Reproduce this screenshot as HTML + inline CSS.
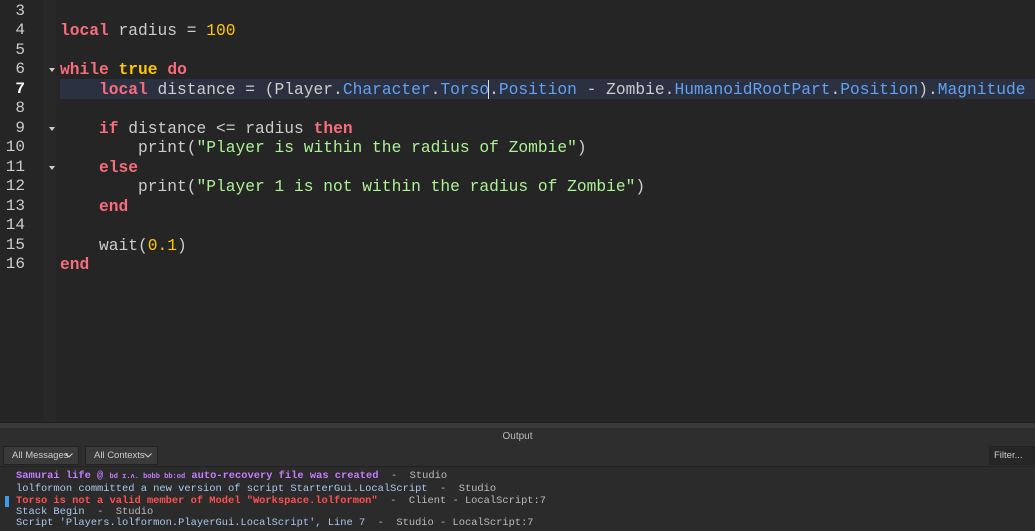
<!DOCTYPE html>
<html><head><style>
body{margin:0;width:1035px;height:531px;overflow:hidden;background:#252525;font-family:"Liberation Mono",monospace;position:relative}
#gut{position:absolute;left:0;top:0;width:44px;height:422px;background:#252525}
#gut2{position:absolute;left:44px;top:0;width:12px;height:422px;background:#282828}
.ln{position:absolute;left:0;width:25px;text-align:right;color:#cccccc;font-size:16px}
.cl{position:absolute;left:60px;font-size:16.25px;color:#cccccc;white-space:pre;letter-spacing:0}
.k{color:#f86d7c;font-weight:bold}.y{color:#ffc600;font-weight:bold}.n{color:#ffc600}.p{color:#61a1f1}.s{color:#adf195}
.fold{position:absolute;left:49px;width:0;height:0;border-left:3px solid transparent;border-right:3px solid transparent;border-top:4px solid #ccc}
#hl{position:absolute;left:60px;top:79px;width:975px;height:20px;background:#2b3140}
#div{position:absolute;left:0;top:422px;width:1035px;height:6px;background:#3a3a3a;border-top:1px solid #1e1e1e}
#oh{position:absolute;left:0;top:428px;width:1035px;height:18px;background:#2e2e2e;color:#bbb;font:10px "Liberation Sans",sans-serif;text-align:center;line-height:18px}
#tb{position:absolute;left:0;top:446px;width:1035px;height:20px;background:#2e2e2e;border-bottom:1px solid #222}
.dd{position:absolute;top:0;height:19px;background:#3a3a3a;border:1px solid #222;color:#ccc;font:9.5px "Liberation Sans",sans-serif;line-height:17px;padding-left:8px;box-sizing:border-box}
.dd svg{position:absolute;right:5px;top:6px}
#log{position:absolute;left:0;top:467px;width:1035px;height:64px;background:#2b2b2b}
.lg{position:absolute;left:16px;font-size:10.4px;white-space:pre;color:#a9c8ec}
</style></head><body>
<div id="gut"></div><div id="gut2"></div>
<div id="hl"></div>
<div class="ln" style="top:2px">3</div>
<div class="ln" style="top:21px">4</div>
<div class="ln" style="top:41px">5</div>
<div class="ln" style="top:60px">6</div>
<div class="ln" style="top:80px;font-weight:bold;color:#fff">7</div>
<div class="ln" style="top:99px">8</div>
<div class="ln" style="top:119px">9</div>
<div class="ln" style="top:138px">10</div>
<div class="ln" style="top:158px">11</div>
<div class="ln" style="top:177px">12</div>
<div class="ln" style="top:197px">13</div>
<div class="ln" style="top:216px">14</div>
<div class="ln" style="top:236px">15</div>
<div class="ln" style="top:255px">16</div>
<div class="fold" style="top:68px"></div>
<div class="fold" style="top:127px"></div>
<div class="fold" style="top:166px"></div>
<div class="cl" style="top:21px"><span class="k">local</span> radius = <span class="n">100</span></div>
<div class="cl" style="top:60px"><span class="k">while</span> <span class="y">true</span> <span class="k">do</span></div>
<div class="cl" style="top:80px">    <span class="k">local</span> distance = (Player.<span class="p">Character</span>.<span class="p">Torso</span><span style="border-left:1px solid #ddd;margin-left:-1px"></span>.<span class="p">Position</span> - Zombie.<span class="p">HumanoidRootPart</span>.<span class="p">Position</span>).<span class="p">Magnitude</span></div>
<div class="cl" style="top:119px">    <span class="k">if</span> distance &lt;= radius <span class="k">then</span></div>
<div class="cl" style="top:138px">        print(<span class="s">"Player is within the radius of Zombie"</span>)</div>
<div class="cl" style="top:158px">    <span class="k">else</span></div>
<div class="cl" style="top:177px">        print(<span class="s">"Player 1 is not within the radius of Zombie"</span>)</div>
<div class="cl" style="top:197px">    <span class="k">end</span></div>
<div class="cl" style="top:236px">    wait(<span class="n">0.1</span>)</div>
<div class="cl" style="top:255px"><span class="k">end</span></div>
<div id="div"></div>
<div id="oh">Output</div>
<div id="tb">
<div class="dd" style="left:3px;width:76px">All Messages <svg width="8" height="5"><path d="M0.5 0.5L4 4L7.5 0.5" stroke="#ccc" fill="none"/></svg></div>
<div class="dd" style="left:85px;width:73px">All Contexts <svg width="8" height="5"><path d="M0.5 0.5L4 4L7.5 0.5" stroke="#ccc" fill="none"/></svg></div>
<div class="dd" style="left:989px;width:46px;background:#262626;padding-left:4px">Filter...</div>
</div>
<div id="log">
<div class="lg" style="top:3px"><span style="color:#c77dff;font-weight:bold">Samurai life @ <span style="font-size:7px">bd ɪ.ʌ. bobb bb:od</span> auto-recovery file was created</span><span style="color:#bbb">  -  Studio</span></div>
<div class="lg" style="top:16px">lolformon committed a new version of script StarterGui.LocalScript<span style="color:#bbb">  -  Studio</span></div>
<div style="position:absolute;left:5px;top:29px;width:4px;height:11px;background:#3a9ee8"></div>
<div class="lg" style="top:28px"><span style="color:#ff4f4f;font-weight:bold">Torso is not a valid member of Model "Workspace.lolformon"</span><span style="color:#bbb">  -  Client - LocalScript:7</span></div>
<div class="lg" style="top:39px">Stack Begin<span style="color:#bbb">  -  Studio</span></div>
<div class="lg" style="top:50px">Script 'Players.lolformon.PlayerGui.LocalScript', Line 7<span style="color:#bbb">  -  Studio - LocalScript:7</span></div>
</div>
</body></html>
